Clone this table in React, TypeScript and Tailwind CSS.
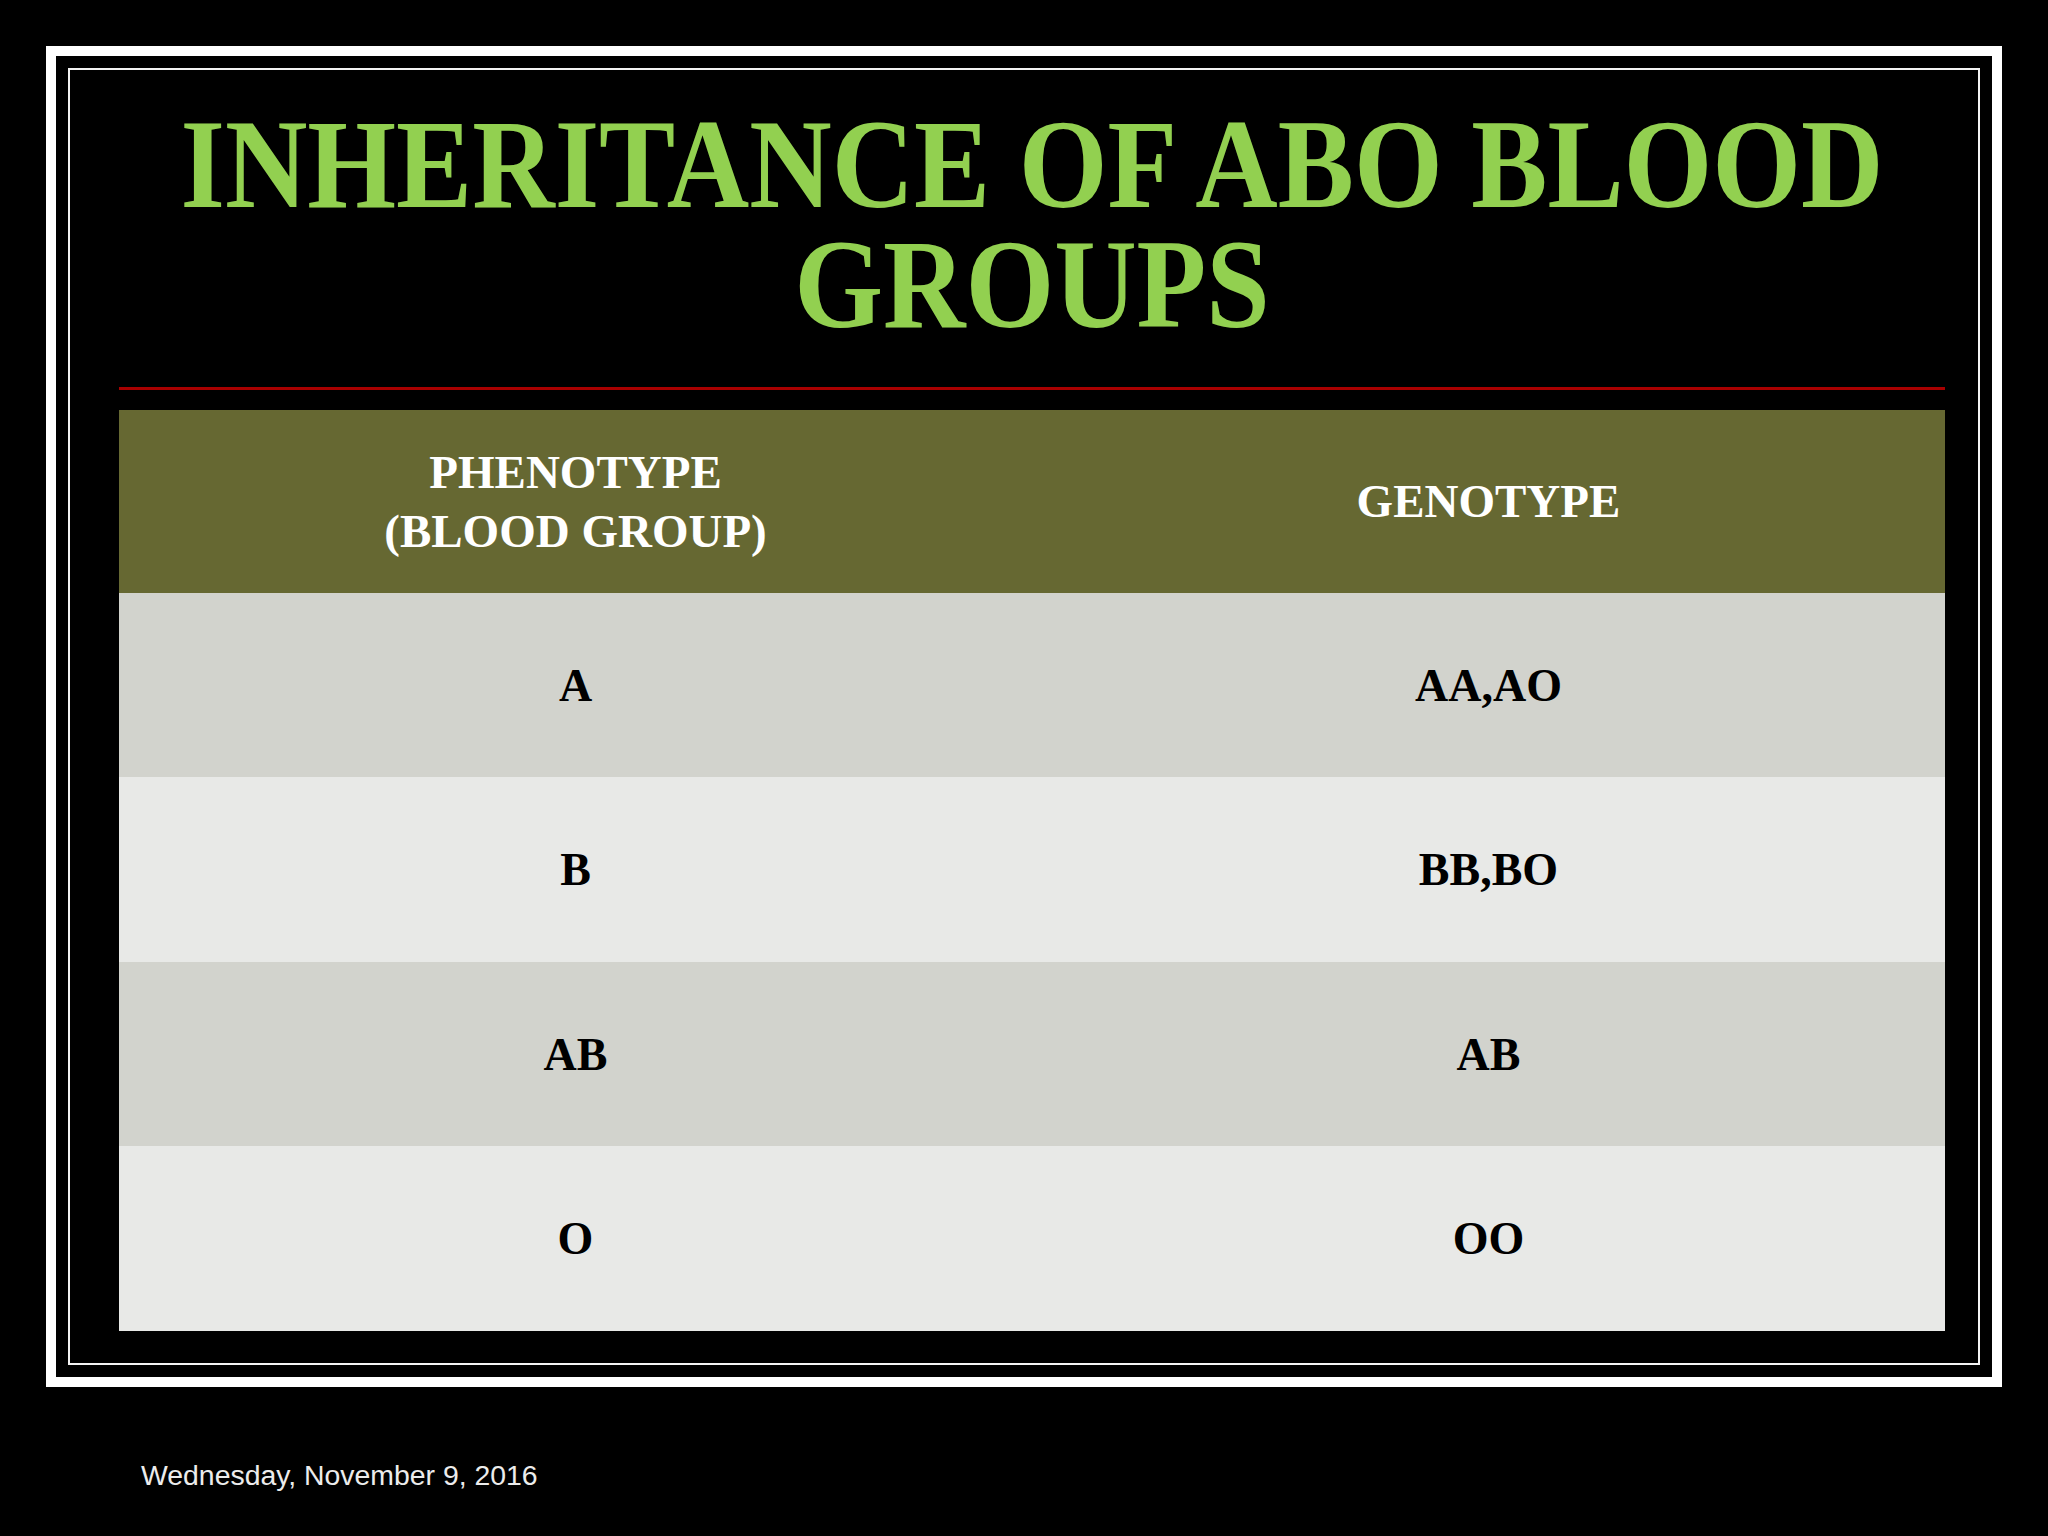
const rows = [
  { pheno: 'A', geno: 'AA,AO', bg: 'bg-[#d2d3cd]', h: 'h-[184px]' },
  { pheno: 'B', geno: 'BB,BO', bg: 'bg-[#e8e9e7]', h: 'h-[185px]' },
  { pheno: 'AB', geno: 'AB', bg: 'bg-[#d2d3cd]', h: 'h-[184px]' },
  { pheno: 'O', geno: 'OO', bg: 'bg-[#e8e9e7]', h: 'h-[185px]' },
]

export default function App() {
  return (
    <div className="w-[2048px] h-[1536px] bg-black overflow-hidden font-['Liberation_Serif',serif]">
      <div className="ml-[46px] mt-[46px] w-[1956px] h-[1341px] border-[10px] border-white p-[12px]">
        <div className="h-full border-2 border-[#f4f4f4] pt-[35px] pl-[49px] pr-[33px]">
          <h1 className="flex flex-col items-center scale-x-[0.906] whitespace-nowrap text-[126px] leading-[120px] font-bold text-[#92d050]">
            <span>INHERITANCE OF ABO BLOOD</span>
            <span>GROUPS</span>
          </h1>

          <div className="mt-[42px] h-[3px] bg-[#a80000]" />

          <div className="mt-[20px]">
            <div className="grid grid-cols-2 h-[183px] bg-[#666832] text-white font-bold text-[47px] leading-[59px]">
              <div className="flex items-center justify-center text-center">
                <div>
                  PHENOTYPE
                  <br />
                  (BLOOD GROUP)
                </div>
              </div>
              <div className="flex items-center justify-center">GENOTYPE</div>
            </div>
            {rows.map((r) => (
              <div key={r.pheno} className={`grid grid-cols-2 ${r.h} ${r.bg} text-black font-bold text-[46px]`}>
                <div className="flex items-center justify-center">{r.pheno}</div>
                <div className="flex items-center justify-center">{r.geno}</div>
              </div>
            ))}
          </div>
        </div>
      </div>

      <p className="ml-[141px] mt-[72px] text-[28.4px] leading-[32px] text-[#ececec] font-['Liberation_Sans',Arial,sans-serif]">
        Wednesday, November 9, 2016
      </p>
    </div>
  )
}
